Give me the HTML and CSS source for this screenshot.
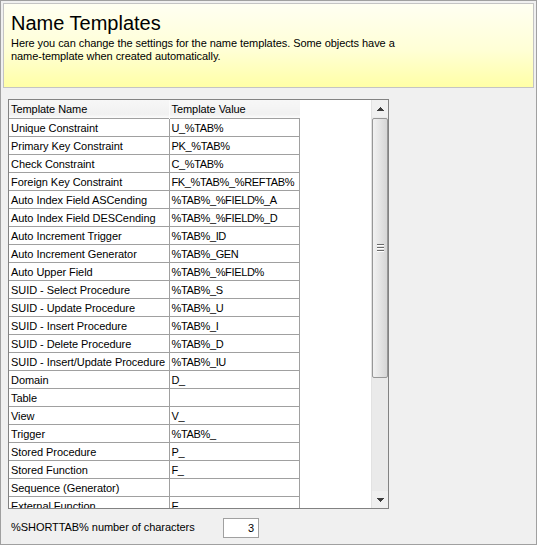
FILE: index.html
```html
<!DOCTYPE html>
<html>
<head>
<meta charset="utf-8">
<link rel="stylesheet" href="styles.css">
</head>
<body>
<div class="window">
  <div class="banner">
    <h1 class="title">Name Templates</h1>
    <p class="desc">Here you can change the settings for the name templates. Some objects have a<br>name-template when created automatically.</p>
  </div>
  <div class="grid">
    <div class="grid-body">
      <table class="tpl">
        <thead>
          <tr><th class="c1">Template Name</th><th class="c2">Template Value</th></tr>
        </thead>
        <tbody>
          <tr><td>Unique Constraint</td><td class="val">U_%TAB%</td></tr>
          <tr><td>Primary Key Constraint</td><td class="val">PK_%TAB%</td></tr>
          <tr><td>Check Constraint</td><td class="val">C_%TAB%</td></tr>
          <tr><td>Foreign Key Constraint</td><td class="val">FK_%TAB%_%REFTAB%</td></tr>
          <tr><td>Auto Index Field ASCending</td><td class="val">%TAB%_%FIELD%_A</td></tr>
          <tr><td>Auto Index Field DESCending</td><td class="val">%TAB%_%FIELD%_D</td></tr>
          <tr><td>Auto Increment Trigger</td><td class="val">%TAB%_ID</td></tr>
          <tr><td>Auto Increment Generator</td><td class="val">%TAB%_GEN</td></tr>
          <tr><td>Auto Upper Field</td><td class="val">%TAB%_%FIELD%</td></tr>
          <tr><td>SUID - Select Procedure</td><td class="val">%TAB%_S</td></tr>
          <tr><td>SUID - Update Procedure</td><td class="val">%TAB%_U</td></tr>
          <tr><td>SUID - Insert Procedure</td><td class="val">%TAB%_I</td></tr>
          <tr><td>SUID - Delete Procedure</td><td class="val">%TAB%_D</td></tr>
          <tr><td>SUID - Insert/Update Procedure</td><td class="val">%TAB%_IU</td></tr>
          <tr><td>Domain</td><td class="val">D_</td></tr>
          <tr><td>Table</td><td class="val"></td></tr>
          <tr><td>View</td><td class="val">V_</td></tr>
          <tr><td>Trigger</td><td class="val">%TAB%_</td></tr>
          <tr><td>Stored Procedure</td><td class="val">P_</td></tr>
          <tr><td>Stored Function</td><td class="val">F_</td></tr>
          <tr><td>Sequence (Generator)</td><td class="val"></td></tr>
          <tr><td>External Function</td><td class="val">E_</td></tr>
        </tbody>
      </table>
    </div>
    <div class="vscroll">
      <div class="sbtn">
        <svg width="7" height="4" viewBox="0 0 7 4"><path d="M3 0h1v1h1v1h1v1h1v1H0V3h1V2h1V1h1z" fill="#3c3c3c"/></svg>
      </div>
      <div class="thumb">
        <span class="grip"></span><span class="grip"></span><span class="grip"></span>
      </div>
      <div class="track"></div>
      <div class="sbtn">
        <svg width="7" height="4" viewBox="0 0 7 4"><path d="M0 0h7v1H6v1H5v1H4v1H3V3H2V2H1V1H0z" fill="#3c3c3c"/></svg>
      </div>
    </div>
  </div>
  <div class="setting">
    <label class="set-label">%SHORTTAB% number of characters</label>
    <div class="num">3</div>
  </div>
</div>
</body>
</html>
```

FILE: styles.css
```css
* { box-sizing: border-box; }
html, body { margin: 0; padding: 0; }
body {
  font-family: "Liberation Sans", Arial, sans-serif;
  font-size: 11px;
  color: #000;
  background: #f0f0f0;
  letter-spacing: -0.06px;
}
.window {
  width: 537px;
  height: 545px;
  border: 1px solid #a0a0a0;
  background: #f0f0f0;
  padding: 2px;
  overflow: hidden;
}
.banner {
  height: 85px;
  border: 1px solid #c4c4c4;
  background: linear-gradient(to bottom, #fffff2 0%, #ffffd6 55%, #ffffa6 100%);
  padding: 8px 7px 0 7px;
}
.title {
  margin: 0;
  font-family: "Liberation Sans", Arial, sans-serif;
  font-weight: normal;
  font-size: 20px;
  line-height: 23px;
  letter-spacing: 0;
}
.desc {
  margin: 2px 0 0 0;
  line-height: 13px;
}
.grid {
  margin: 11px 0 0 5px;
  width: 381px;
  height: 410px;
  border: 1px solid #828282;
  background: #fff;
  display: flex;
}
.grid-body {
  flex: 1;
  overflow: hidden;
}
.tpl {
  border-collapse: collapse;
  table-layout: fixed;
  width: 291px;
}
.tpl th {
  height: 18px;
  padding: 1px 2px 0 2px;
  font-weight: normal;
  text-align: left;
  background: linear-gradient(to bottom, #f7f7f7, #f1f1f1 80%, #fcfcfc);
  border: none;
  white-space: nowrap;
}
.tpl th.c1 { width: 160px; border-right: 1px solid #fbfbfb; }
.tpl td {
  height: 18px;
  padding: 1px 2px 0 2px;
  border: 1px solid #a0a0a0;
  border-left: none;
  white-space: nowrap;
  overflow: hidden;
}
.tpl td.val { letter-spacing: -0.35px; }
.vscroll {
  width: 17px;
  display: flex;
  flex-direction: column;
  background: #eaeaea;
  border-left: 1px solid #e2e2e2;
}
.sbtn {
  height: 17px;
  display: flex;
  align-items: center;
  justify-content: center;
  background: #f0f0f0;
}
.thumb {
  margin: 1px 0 0 0;
  height: 260px;
  border: 1px solid #979797;
  border-radius: 2px;
  background: linear-gradient(to right, #f2f2f2 0%, #e6e6e6 45%, #d6d6d6 100%);
  display: flex;
  flex-direction: column;
  align-items: center;
  justify-content: center;
  gap: 1px;
}
.grip {
  display: block;
  width: 7px;
  height: 1px;
  background: #6a6a6a;
  box-shadow: 0 1px 0 #ffffff;
  margin-bottom: 1px;
}
.track { flex: 1; }
.setting {
  display: flex;
  align-items: center;
  margin: 9px 0 0 8px;
  height: 20px;
}
.set-label { width: 212px; padding-bottom: 2px; }
.num {
  width: 36px;
  height: 20px;
  border: 1px solid #a0a0a0;
  background: #fff;
  text-align: right;
  padding: 0 4px;
  line-height: 18px;
}
```
